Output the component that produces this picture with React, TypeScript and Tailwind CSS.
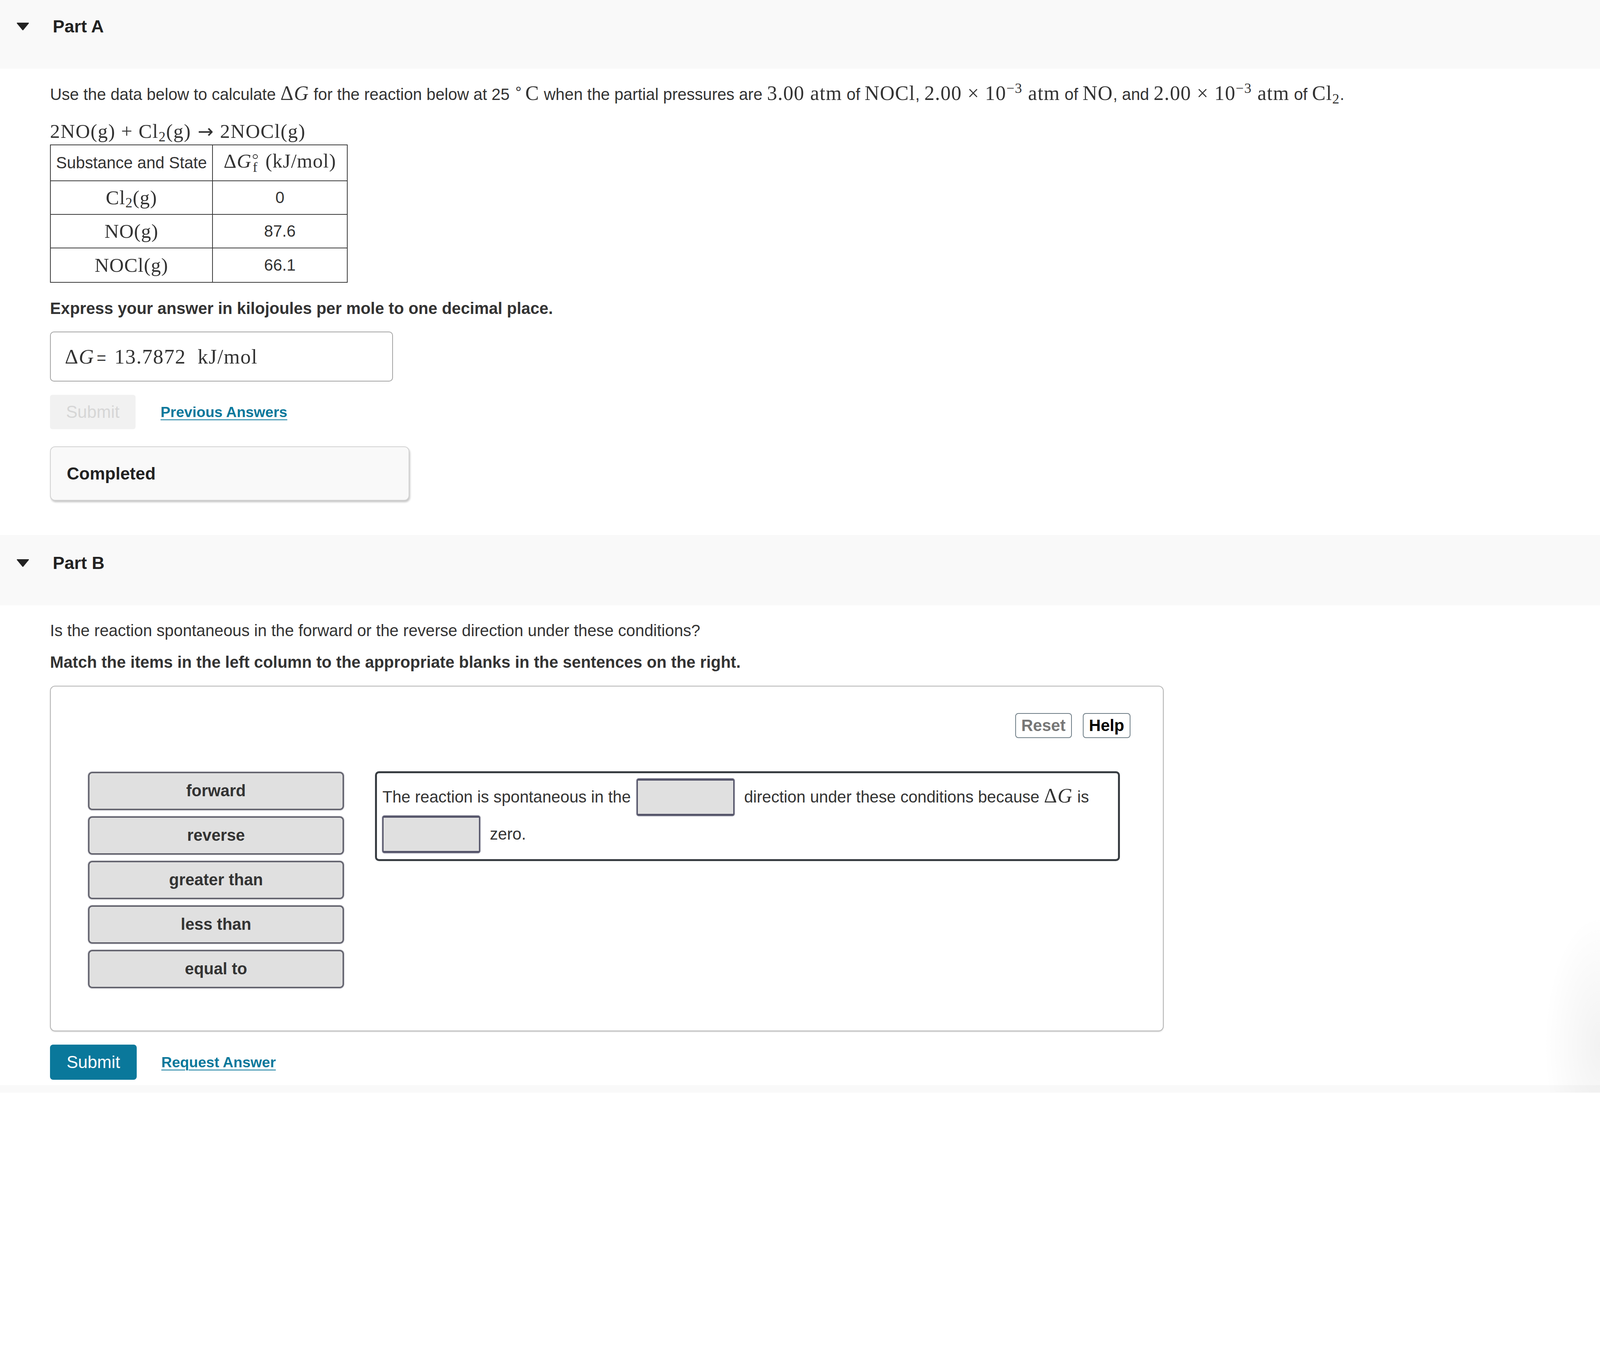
import React from "react";

const serif = "font-['Liberation_Serif','Times_New_Roman',serif]";

function M({ children }: { children: React.ReactNode }) {
  return <span className={`${serif} text-[52px] tracking-[0.025em] leading-none`}>{children}</span>;
}

function Tri() {
  return (
    <svg width="33" height="20" viewBox="0 0 41 25" className="shrink-0">
      <path d="M3 0 H38 Q41 0 39.5 2.6 L22 23.6 Q20.5 25.4 19 23.6 L1.5 2.6 Q0 0 3 0 Z" fill="#222" />
    </svg>
  );
}

function Arrow() {
  return <span className="font-['DejaVu_Sans',sans-serif] text-[0.95em] tracking-normal mx-[0.05em]">→</span>;
}

function Gf() {
  return (
    <>
      Δ<i>G</i>
      <span className="relative inline-block text-[0.7em] leading-none align-[-0.3em] ml-[0.08em] mr-[0.55em]">
        f
        <span className="absolute left-[0em] top-[-0.46em] w-[0.36em] h-[0.36em] rounded-full border-2 border-[#333]" />
      </span>
    </>
  );
}

function Item({ label }: { label: string }) {
  return (
    <div className="h-[97px] bg-[#e0e0e0] border-[3px] border-[#5b5b66] rounded-[10px] shadow-[0_0_0_1.5px_#a5a5ae] flex items-center justify-center font-bold text-[41.6px] text-[#333]">
      {label}
    </div>
  );
}

function Blank({ extra }: { extra: string }) {
  return (
    <span
      className={`inline-block w-[250px] h-[95px] bg-[#e0e0e0] border-x-[3px] border-y-[5px] border-[#55556a] rounded-[5px] shadow-[0_0_0_1.5px_#9c9caa] ${extra}`}
    />
  );
}

const cell = "p-0 border-2 border-[#3a3a3a] text-center";
const serifCell = `p-0 border-2 border-[#3a3a3a] text-center ${serif} text-[51px] tracking-[0.02em]`;

export default function App() {
  return (
    <div className="relative w-full h-[2798px] overflow-hidden bg-white text-[#333] font-['Liberation_Sans',Arial,sans-serif]">
      {/* Part A header */}
      <div className="h-[176px] pt-[42px] bg-[#f9f9f9]">
        <div className="flex items-center h-[51px] pl-[42px]">
          <Tri />
          <span className="ml-[60px] text-[45px] font-bold leading-[51px] text-[#222]">Part A</span>
        </div>
      </div>

      {/* Part A body */}
      <div className="pl-[128px]">
        <p className="mt-[34px] text-[41.6px] leading-[64px] whitespace-nowrap">
          Use the data below to calculate{" "}
          <M>
            Δ<i>G</i>
          </M>{" "}
          for the reaction below at 25{" "}
          <M>
            <sup className="text-[0.7em] mr-[0.12em]">∘</sup>C
          </M>{" "}
          when the partial pressures are <M>3.00 atm</M> of <M>NOCl</M>,{" "}
          <M>
            2.00 × 10<sup className="text-[0.7em]">−3</sup> atm
          </M>{" "}
          of <M>NO</M>, and{" "}
          <M>
            2.00 × 10<sup className="text-[0.7em]">−3</sup> atm
          </M>{" "}
          of{" "}
          <M>
            Cl<sub className="text-[0.7em]">2</sub>
          </M>
          .
        </p>

        <p className={`mt-[34px] ${serif} text-[51px] tracking-[0.03em] leading-[56px] whitespace-nowrap`}>
          2NO(g) + Cl<sub className="text-[0.7em]">2</sub>(g) <Arrow /> 2NOCl(g)
        </p>

        <table className="mt-[6px] border-collapse text-[41.6px] leading-none">
          <tbody>
            <tr className="h-[92px]">
              <td className={`w-[415px] ${cell}`}>Substance and State</td>
              <td className={`w-[345px] ${serifCell}`}>
                <Gf />
                (kJ/mol)
              </td>
            </tr>
            <tr className="h-[86px]">
              <td className={serifCell}>
                Cl<sub className="text-[0.7em]">2</sub>(g)
              </td>
              <td className={cell}>0</td>
            </tr>
            <tr className="h-[86px]">
              <td className={serifCell}>NO(g)</td>
              <td className={cell}>87.6</td>
            </tr>
            <tr className="h-[88px]">
              <td className={serifCell}>NOCl(g)</td>
              <td className={cell}>66.1</td>
            </tr>
          </tbody>
        </table>

        <p className="mt-[42px] text-[41.6px] leading-[48px] font-bold">
          Express your answer in kilojoules per mole to one decimal place.
        </p>

        <div className="mt-[35px] w-[878px] h-[128px] border-2 border-[#a3a3a3] rounded-[10px] flex items-center pl-[36px]">
          <span className={`${serif} text-[53px] tracking-[0.03em] leading-none whitespace-nowrap`}>
            Δ<i>G</i>
            <span className="font-['Liberation_Sans',Arial,sans-serif] text-[41.6px] tracking-normal mx-[6px]">=</span>{" "}
            13.7872
            <span className="ml-[30px]">kJ/mol</span>
          </span>
        </div>

        <div className="mt-[34px] flex items-center gap-[64px]">
          <button className="w-[219px] h-[88px] bg-[#f1f1f1] rounded-[6px] text-[44px] text-[#d6d6d6]">Submit</button>
          <span className="text-[37.6px] font-bold text-[#0a789b] underline decoration-2 underline-offset-[6px]">
            Previous Answers
          </span>
        </div>

        <div className="mt-[44px] w-[920px] h-[139px] bg-[#f9f9f9] border-2 border-[#d2d2d2] rounded-[13px] shadow-[2px_4px_4px_rgba(0,0,0,0.22)] flex items-center pl-[41px]">
          <span className="text-[44px] font-bold text-[#222]">Completed</span>
        </div>
      </div>

      {/* Part B header */}
      <div className="mt-[88px] h-[180px] pt-[46px] bg-[#f9f9f9]">
        <div className="flex items-center h-[51px] pl-[42px]">
          <Tri />
          <span className="ml-[60px] text-[45px] font-bold leading-[51px] text-[#222]">Part B</span>
        </div>
      </div>

      {/* Part B body */}
      <div className="pl-[128px]">
        <p className="mt-[39px] text-[41.6px] leading-[51px]">
          Is the reaction spontaneous in the forward or the reverse direction under these conditions?
        </p>
        <p className="mt-[30px] text-[41.6px] leading-[51px] font-bold">
          Match the items in the left column to the appropriate blanks in the sentences on the right.
        </p>

        <div className="mt-[35px] w-[2851px] h-[885px] border-2 border-[#b3b3b3] rounded-[13px] shadow-[0_2px_3px_rgba(0,0,0,0.12)] flex flex-col">
          <div className="flex justify-end gap-[28px] pt-[68px] pr-[83px]">
            <button className="h-[64px] px-[14px] border-2 border-[#6e7d86] rounded-[8px] text-[41.6px] font-bold text-[#777] leading-none">
              Reset
            </button>
            <button className="h-[64px] px-[14px] border-2 border-[#6e7d86] rounded-[8px] text-[41.6px] font-bold text-black leading-none">
              Help
            </button>
          </div>

          <div className="mt-[87px] pl-[96px] flex items-start gap-[80px]">
            <div className="w-[654px] flex flex-col gap-[17px]">
              <Item label="forward" />
              <Item label="reverse" />
              <Item label="greater than" />
              <Item label="less than" />
              <Item label="equal to" />
            </div>

            <div className="w-[1907px] h-[230px] -mt-[2px] border-[5px] border-[#383d42] rounded-[10px] px-[14px] pt-[14px] flex flex-wrap items-center content-start text-[41.6px] text-[#333]">
              <span className="mr-[15px] whitespace-nowrap">The reaction is spontaneous in the</span>
              <Blank extra="mr-[25px]" />
              <span className="whitespace-nowrap">
                direction under these conditions because{" "}
                <M>
                  Δ<i>G</i>
                </M>{" "}
                is
              </span>
              <Blank extra="mr-[25px]" />
              <span>zero.</span>
            </div>
          </div>
        </div>

        <div className="mt-[34px] flex items-center gap-[63px]">
          <button className="w-[222px] h-[90px] bg-[#0a789b] rounded-[8px] text-[44px] text-white">Submit</button>
          <span className="text-[37.6px] font-bold text-[#0a789b] underline decoration-2 underline-offset-[6px]">
            Request Answer
          </span>
        </div>
      </div>

      <div className="mt-[14px] h-[200px] bg-[#f9f9f9]" />

      <div className="pointer-events-none absolute right-0 top-[2318px] w-[144px] h-[480px] bg-[radial-gradient(ellipse_100%_70%_at_100%_75%,rgba(0,0,0,0.05),transparent)]" />
    </div>
  );
}
